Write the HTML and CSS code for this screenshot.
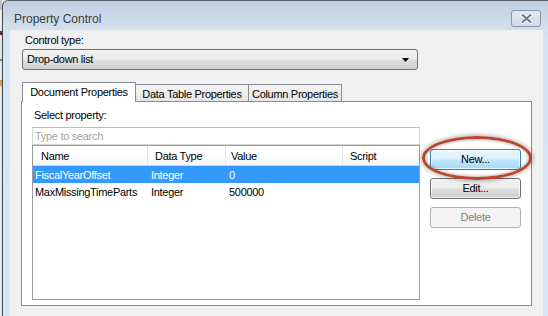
FILE: index.html
```html
<!DOCTYPE html>
<html>
<head>
<meta charset="utf-8">
<link rel="stylesheet" href="styles.css">
</head>
<body>
<div class="screen">
  <div class="behind"></div>
  <div class="window">
    <div class="titlebar">
      <span class="title">Property Control</span>
      <div class="close">
        <svg width="13" height="11" viewBox="0 0 13 11">
          <path d="M2.5 2 L10.5 9 M10.5 2 L2.5 9" stroke="#f6f8fb" stroke-width="4.2" stroke-linecap="round"/>
          <path d="M2.5 2 L10.5 9 M10.5 2 L2.5 9" stroke="#6f7884" stroke-width="2" stroke-linecap="round"/>
        </svg>
      </div>
    </div>
    <div class="client">
      <div class="lbl-top">Control type:</div>
      <div class="combo">
        <span>Drop-down list</span>
        <svg width="7" height="4" viewBox="0 0 7 4"><polygon points="0,0 7,0 3.5,4" fill="#000"/></svg>
      </div>
      <div class="tabs">
        <div class="tab active">Document Properties</div>
        <div class="tab t2">Data Table Properties</div>
        <div class="tab t3">Column Properties</div>
      </div>
      <div class="panel">
        <div class="lbl-sel">Select property:</div>
        <div class="panel-body">
          <div class="left">
            <div class="search">Type to search</div>
            <div class="list">
              <div class="row header">
                <div class="c1">Name</div>
                <div class="c2">Data Type</div>
                <div class="c3">Value</div>
                <div class="c4">Script</div>
              </div>
              <div class="row sel">
                <div class="c1">FiscalYearOffset</div>
                <div class="c2">Integer</div>
                <div class="c3">0</div>
                <div class="c4"></div>
              </div>
              <div class="row">
                <div class="c1">MaxMissingTimeParts</div>
                <div class="c2">Integer</div>
                <div class="c3">500000</div>
                <div class="c4"></div>
              </div>
            </div>
          </div>
          <div class="buttons">
            <div class="btn hot">New...</div>
            <div class="btn">Edit...</div>
            <div class="btn disabled">Delete</div>
            <div class="ring"></div>
          </div>
        </div>
      </div>
    </div>
  </div>
</div>
</body>
</html>
```
FILE: styles.css
```css
html, body {
  margin: 0;
  padding: 0;
}
body {
  width: 548px;
  height: 316px;
  overflow: hidden;
  font-family: "Liberation Sans", Arial, sans-serif;
  font-size: 11px;
  letter-spacing: -0.3px;
  color: #000;
  background: #f0f0f0;
}
.screen {
  display: flex;
  width: 548px;
  height: 316px;
}
.behind {
  width: 2px;
  flex: none;
  background: linear-gradient(#b9c6d4 0, #b9c6d4 10px, #e9ecef 10px, #e9ecef 31px, #6b2a2a 31px, #6b2a2a 35px, #e4e4e4 35px, #e4e4e4 59px, #3fa34d 59px, #3fa34d 61px, #e6e6e6 61px, #e6e6e6 80px, #d8a040 80px, #d8a040 86px, #e8e8e8 86px);
}
.window {
  flex: 1;
  min-width: 0;
  display: flex;
  flex-direction: column;
  border-left: 1px solid #44484d;
  border-top: 1px solid #5a6068;
  border-top-left-radius: 6px;
  background: linear-gradient(#bfcfe2 0, #d3e0ef 29px, #d7e4f3 40px, #d8e5f4 100%);
}
.titlebar {
  flex: none;
  height: 29px;
  display: flex;
  align-items: flex-start;
  justify-content: space-between;
  padding-left: 11px;
}
.title {
  font-size: 12px;
  letter-spacing: 0;
  line-height: 14px;
  margin-top: 11px;
  color: #3a3d42;
}
.close {
  margin-top: 9px;
  margin-right: 7px;
  width: 30px;
  height: 17px;
  box-sizing: border-box;
  border: 1px solid #8a98ab;
  border-radius: 3px;
  background: linear-gradient(#e0e8f2, #cfdbe9);
  display: flex;
  align-items: center;
  justify-content: center;
}
.client {
  flex: 1;
  margin: 0 5px 0 7px;
  background: #f0f0f0;
  padding-top: 4px;
}
.lbl-top {
  line-height: 13px;
  padding-left: 15px;
}
.combo {
  margin: 2px 0 0 12px;
  width: 396px;
  height: 21px;
  box-sizing: border-box;
  border: 1px solid #707070;
  border-radius: 3px;
  background: linear-gradient(#f3f3f3 0%, #ebebeb 48%, #dedede 52%, #d0d0d0 100%);
  display: flex;
  align-items: center;
  justify-content: space-between;
  padding: 0 8px 0 4px;
  line-height: 15px;
}
.tabs {
  display: flex;
  align-items: flex-end;
  margin: 12px 0 0 12px;
  height: 19px;
}
.tab {
  box-sizing: border-box;
  height: 17px;
  border: 1px solid #898c95;
  border-bottom: none;
  background: linear-gradient(#f4f4f4, #e6e6e6);
  text-align: center;
  line-height: 16px;
  padding-top: 1px;
}
.tab.active {
  position: relative;
  z-index: 1;
  width: 114px;
  height: 20px;
  margin-bottom: -1px;
  background: #fff;
  line-height: 17px;
  padding-top: 1px;
}
.tab.t2 {
  width: 113px;
  border-left: none;
}
.tab.t3 {
  width: 93px;
  border-left: none;
}
.panel {
  margin-left: 11px;
  width: 511px;
  height: 205px;
  box-sizing: border-box;
  border: 1px solid #898c95;
  background: #fff;
  padding-top: 7px;
}
.lbl-sel {
  line-height: 13px;
  padding-left: 12px;
  margin-bottom: 5px;
}
.panel-body {
  display: flex;
  padding-left: 10px;
}
.left {
  width: 388px;
  flex: none;
}
.search {
  box-sizing: border-box;
  height: 18px;
  border: 1px solid #d6d6d6;
  border-top-color: #bcbcbc;
  color: #a3a3a3;
  padding-left: 2px;
  line-height: 16px;
}
.list {
  box-sizing: border-box;
  height: 155px;
  border: 1px solid #9c9c9c;
}
.row {
  display: flex;
  height: 17px;
  line-height: 15px;
  padding-top: 2px;
  box-sizing: border-box;
  white-space: nowrap;
}
.row > div {
  box-sizing: border-box;
  overflow: hidden;
}
.row .c1 { width: 115px; padding-left: 2px; }
.row .c2 { width: 78px; padding-left: 3px; }
.row .c3 { width: 117px; padding-left: 3px; }
.row .c4 { flex: 1; }
.row.header {
  height: 20px;
  padding-top: 0;
  border-bottom: 1px solid #d5d5d5;
  background: linear-gradient(#fff 0, #fff 55%, #f4f5f7 100%);
  line-height: 17px;
}
.row.header > div {
  padding-top: 2px;
  border-right: 1px solid #e2e3e6;
}
.row.header .c1 { padding-left: 8px; }
.row.header .c2 { padding-left: 7px; }
.row.header .c3 { padding-left: 5px; }
.row.header .c4 { padding-left: 7px; border-right: none; }
.row.sel {
  background: #3399ff;
  color: #fff;
}
.buttons {
  position: relative;
  width: 91px;
  margin: 22px 0 0 10px;
  display: flex;
  flex-direction: column;
  gap: 8px;
}
.btn {
  box-sizing: border-box;
  height: 21px;
  border: 1px solid #707070;
  border-radius: 3px;
  background: linear-gradient(#f2f2f2 0%, #ebebeb 48%, #dddddd 52%, #cfcfcf 100%);
  box-shadow: inset 0 0 0 1px rgba(255,255,255,0.7);
  text-align: center;
  line-height: 19px;
}
.btn.hot {
  border-color: #3c7fb1;
  background: linear-gradient(#eaf6fd 0%, #d9f0fc 48%, #bee6fd 52%, #a7d9f5 100%);
}
.btn.disabled {
  border-color: #adb2b5;
  background: #f4f4f4;
  box-shadow: none;
  color: #838383;
}
.ring {
  position: absolute;
  left: -8px;
  top: -13px;
  width: 110px;
  height: 44px;
  box-sizing: border-box;
  border: 3.5px solid #bb452e;
  border-radius: 50%;
  box-shadow: 0 0 4px 1px rgba(0,0,0,0.32), inset 0 0 3px 1px rgba(0,0,0,0.28);
}
```
